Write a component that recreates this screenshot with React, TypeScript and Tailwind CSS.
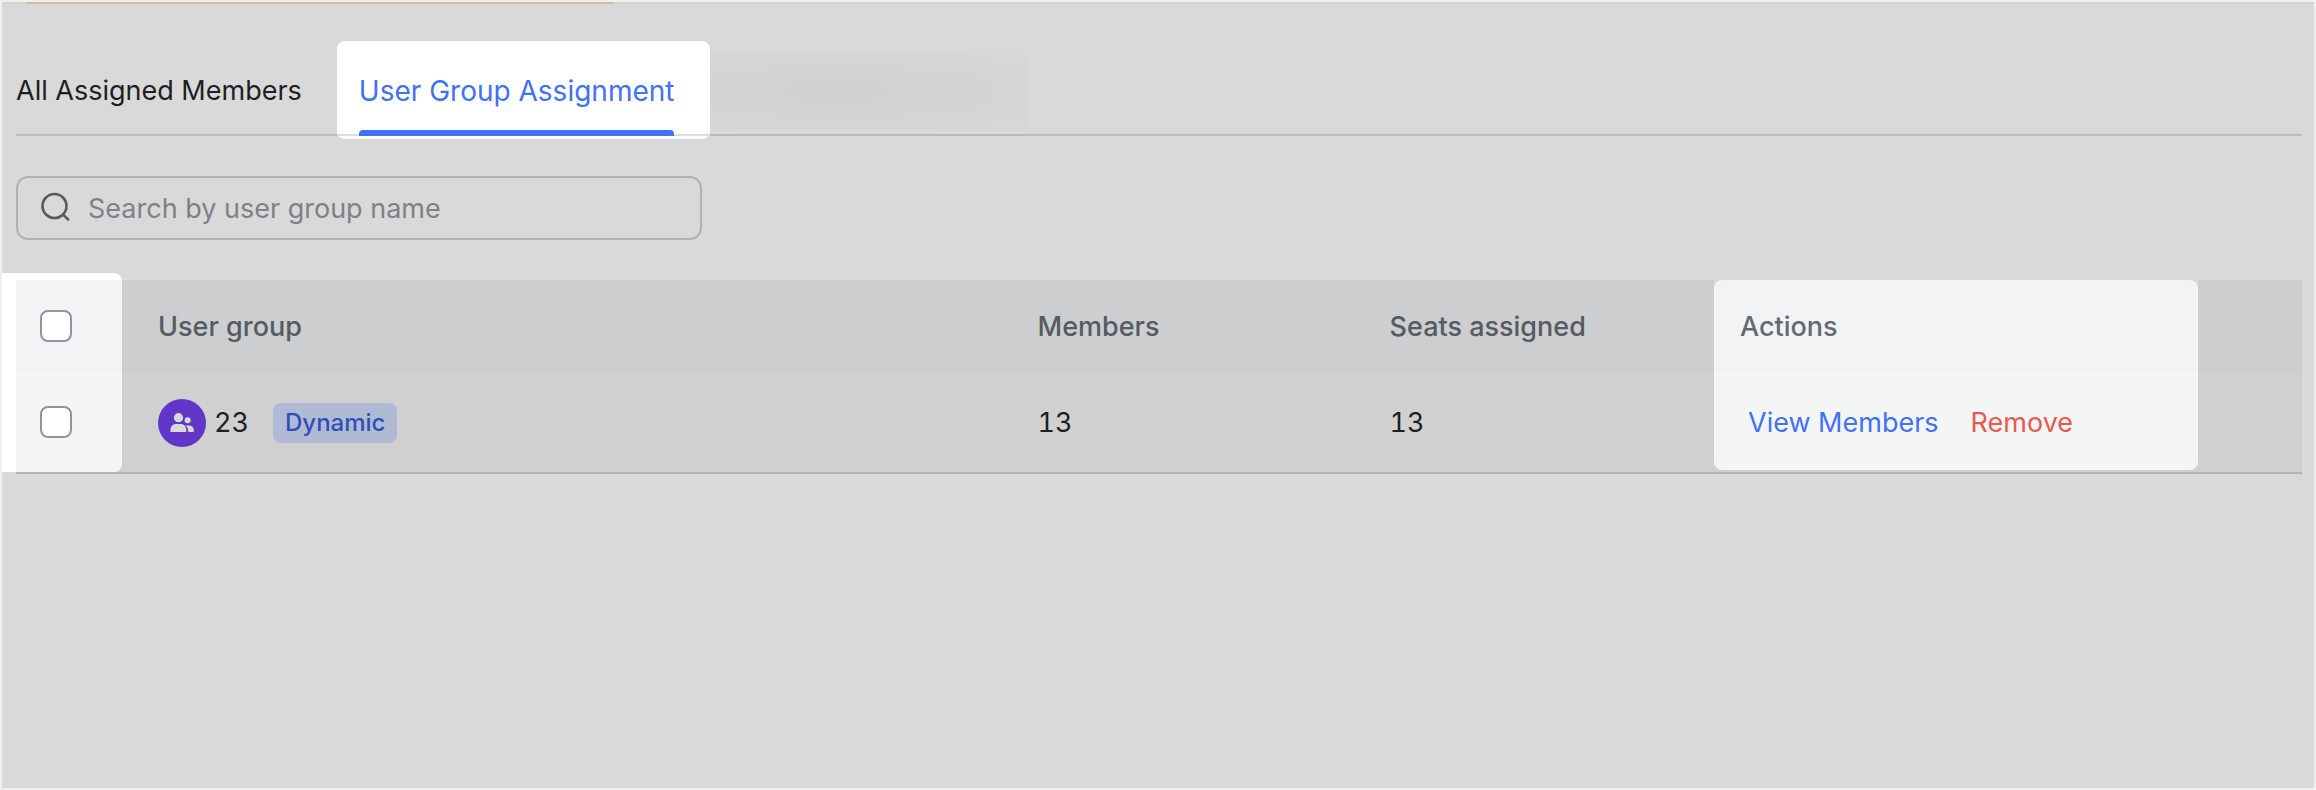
import { useState } from 'react'

type UserGroup = {
  id: string
  name: string
  type: string
  members: number
  seats: number
}

const GROUPS: UserGroup[] = [
  { id: 'g23', name: '23', type: 'Dynamic', members: 13, seats: 13 },
]

function SearchIcon() {
  return (
    <svg width="32" height="32" viewBox="0 0 32 32" fill="none" stroke="#565b62" strokeWidth="2.6" strokeLinecap="round" aria-hidden="true">
      <circle cx="14.5" cy="14" r="12" />
      <path d="m23.1 22.6 5 4.9" />
    </svg>
  )
}

function GroupIcon() {
  return (
    <svg width="24" height="20" viewBox="0 0 24 20" fill="#d9d9d9" aria-hidden="true">
      <circle cx="8.5" cy="4.7" r="4.6" />
      <circle cx="17.6" cy="7.2" r="3" />
      <path d="M.4 18.2c0-4.6 2.3-7.1 5.8-7.1h4.4c3.5 0 5.8 2.5 5.8 7.1 0 .6-.3.9-.9.9H1.3c-.6 0-.9-.3-.9-.9Z" />
      <path d="M15.2 12.4h3.6c3.200 0 5.100 1.700 5.100 5.200 0 1-.400 1.500-1.300 1.500h-4.400c.300-3-.700-5.200-3-6.700Z" />
    </svg>
  )
}

function Checkbox({ label, checked, onChange }: { label: string; checked: boolean; onChange: () => void }) {
  return (
    <input
      type="checkbox"
      aria-label={label}
      checked={checked}
      onChange={onChange}
      className="relative block size-8 appearance-none rounded-lg border-2 border-[#8f949e] bg-white checked:bg-[#4270f6]"
    />
  )
}

export default function App() {
  const [tab, setTab] = useState('groups')
  const [query, setQuery] = useState('')
  const [selected, setSelected] = useState<string[]>([])

  const rows = GROUPS.filter(g => g.name.includes(query))
  const allSelected = rows.length > 0 && rows.every(g => selected.includes(g.id))

  const toggle = (id: string) =>
    setSelected(prev => (prev.includes(id) ? prev.filter(s => s !== id) : [...prev, id]))

  return (
    <div className="min-h-screen border-2 border-[#f0f0f0] bg-[#d9d9d9] font-['Inter',sans-serif] text-[27px] leading-10 text-[#1c1f23]">
      {/* bottom edge of the notice above */}
      <div className="h-0.5 bg-[#d9d2cc]">
        <div className="ml-6 h-full w-full max-w-[588px] rounded-b bg-[#d2bba6]" />
      </div>

      <main className="pr-3 pl-3.5">
        <div role="tablist" className="mt-9 flex h-24 items-stretch border-b-2 border-[#bbb]">
          <button role="tab" aria-selected={tab === 'all'} onClick={() => setTab('all')} className="pt-2">
            All Assigned Members
          </button>
          <button
            role="tab"
            aria-selected={tab === 'groups'}
            onClick={() => setTab('groups')}
            className="relative ml-[35px] pt-2 pr-9 pl-[22px] text-[28px] text-[#4270f6]"
          >
            <span className="absolute inset-x-0 top-px -bottom-[5px] rounded-lg bg-white" />
            <span className="absolute inset-x-0 -bottom-0.5 h-0.5 bg-[#ddd]" />
            <span className="absolute right-9 -bottom-0.5 left-[22px] h-1.5 rounded-t bg-[#4270f6]" />
            <span className="relative">User Group Assignment</span>
          </button>
          <div className="mt-3.5 mb-1 w-[318px] bg-radial-[at_40%_50%] from-[#d0d0d0] to-[#d8d8d8]" />
        </div>

        <label className="mt-10 flex h-16 w-[686px] items-center gap-4 rounded-xl border-2 border-[#b1b1b1] px-[22px]">
          <SearchIcon />
          <input
            type="text"
            aria-label="Search by user group name"
            placeholder="Search by user group name"
            value={query}
            onChange={e => setQuery(e.target.value)}
            className="min-w-0 flex-1 bg-transparent pt-0.5 outline-none placeholder:text-[#7d8188]"
          />
        </label>

        <table className="mt-10 w-full table-fixed border-separate border-spacing-0 text-left">
          <colgroup>
            <col className="w-[106px]" />
            <col className="w-[39%]" />
            <col className="w-[15.4%]" />
            <col />
            <col className="w-[484px]" />
            <col className="w-[104px]" />
          </colgroup>
          <thead>
            <tr className="h-[92px] bg-[#cdced0] text-[#565b62]">
              <th className="relative p-0 pl-6">
                <span className="absolute -top-[7px] right-0 bottom-0 -left-3.5 rounded-tr-lg bg-white" />
                <span className="absolute inset-0 bg-[#f1f3f5]" />
                <Checkbox
                  label="Select all user groups"
                  checked={allSelected}
                  onChange={() => setSelected(allSelected ? [] : rows.map(g => g.id))}
                />
              </th>
              <th className="p-0 pt-0.5 pl-9 font-medium">User group</th>
              <th className="p-0 pt-0.5 pl-6 font-medium">Members</th>
              <th className="p-0 pt-0.5 pl-6 font-medium">Seats assigned</th>
              <th className="rounded-t-lg bg-[#f1f3f5] p-0 pt-0.5 pl-[26px] font-medium text-[#656a72]">Actions</th>
              <td className="p-0" />
            </tr>
          </thead>
          <tbody>
            {rows.map(group => (
              <tr key={group.id} className="h-[102px] bg-[#d0d0d0] *:border-b-2 *:border-[#b3b4b4]">
                <td className="relative p-0 pl-6">
                  <span className="absolute top-0 bottom-0 -left-3.5 w-3.5 bg-white" />
                  <span className="absolute inset-0 rounded-br-lg bg-[#f4f6f6]" />
                  <Checkbox
                    label={`Select group ${group.name}`}
                    checked={selected.includes(group.id)}
                    onChange={() => toggle(group.id)}
                  />
                </td>
                <td className="p-0 pt-0.5 pl-9">
                  <div className="flex items-center">
                    <span className="flex size-12 items-center justify-center rounded-full bg-[#6236c9]">
                      <GroupIcon />
                    </span>
                    <span className="ml-2 tabular-nums">{group.name}</span>
                    <span className="ml-6 rounded-lg bg-[#b1bad4] px-3 text-2xl leading-10 font-medium text-[#2c50b8]">
                      {group.type}
                    </span>
                  </div>
                </td>
                <td className="p-0 pt-0.5 pl-6 tabular-nums">{group.members}</td>
                <td className="p-0 pt-0.5 pl-6 tabular-nums">{group.seats}</td>
                <td className="relative p-0 pt-0.5 pl-[34px]">
                  <span className="absolute inset-x-0 top-0 bottom-0.5 rounded-b-lg bg-[#f4f6f6]" />
                  <div className="relative flex gap-8">
                    <button className="text-[#4270f6]">View Members</button>
                    <button className="text-[#e65a4f]">Remove</button>
                  </div>
                </td>
                <td className="p-0" />
              </tr>
            ))}
          </tbody>
        </table>
      </main>
    </div>
  )
}
